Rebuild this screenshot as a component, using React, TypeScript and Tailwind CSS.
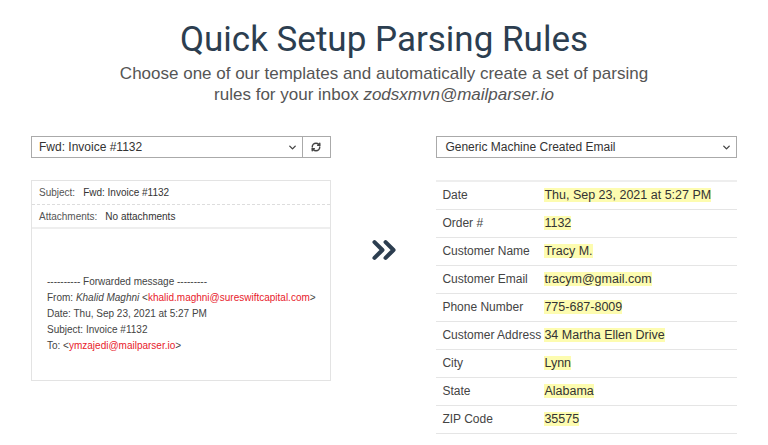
import { ChevronsRight, ChevronDown, RefreshCw } from "lucide-react";

const rows: [string, string][] = [
  ["Date", "Thu, Sep 23, 2021 at 5:27 PM"],
  ["Order #", "1132"],
  ["Customer Name", "Tracy M."],
  ["Customer Email", "tracym@gmail.com"],
  ["Phone Number", "775-687-8009"],
  ["Customer Address", "34 Martha Ellen Drive"],
  ["City", "Lynn"],
  ["State", "Alabama"],
  ["ZIP Code", "35575"],
];

export default function App() {
  return (
    <div className="w-[768px] h-[445px] overflow-hidden bg-white font-[Liberation_Sans] text-[#333]">
      <div className="pt-[18px] text-center">
        <h1 className="text-[35px] leading-[44px] text-[#2c3e50] font-[Roboto]">Quick Setup Parsing Rules</h1>
        <p className="mt-[1px] text-[17px] leading-[21px] text-[#555]">
          Choose one of our templates and automatically create a set of parsing
          <br />
          rules for your inbox <i>zodsxmvn@mailparser.io</i>
        </p>
      </div>

      <div className="flex mt-[31px] px-[31px]">
        <div className="w-[300px]">
          <div className="flex h-[22px] border border-[#aaa]">
            <div className="flex-1 flex items-center justify-between pl-[7px] pr-[4px] text-[12px]">
              <span>Fwd: Invoice #1132</span>
              <ChevronDown size={11} strokeWidth={3} className="text-[#444]" />
            </div>
            <div className="w-[28px] border-l border-[#aaa] flex items-center justify-center">
              <RefreshCw size={10} strokeWidth={3.5} className="text-[#444]" />
            </div>
          </div>
          <div className="mt-[22px] h-[201px] border border-[#e3e3e3] text-[10px]">
            <div className="h-[24px] flex items-center px-[7px] border-b border-dashed border-[#ddd]">
              <span className="text-[#555]">Subject:</span>
              <span className="ml-[8px]">Fwd: Invoice #1132</span>
            </div>
            <div className="h-[24px] flex items-center px-[7px] border-b-2 border-[#eee]">
              <span className="text-[#555]">Attachments:</span>
              <span className="ml-[8px]">No attachments</span>
            </div>
            <div className="pl-[15px] pt-[45px] leading-[16px] text-[#444]">
              <div>---------- Forwarded message ---------</div>
              <div>From: <i>Khalid Maghni</i> &lt;<span className="text-[#e8212b]">khalid.maghni@sureswiftcapital.com</span>&gt;</div>
              <div>Date: Thu, Sep 23, 2021 at 5:27 PM</div>
              <div>Subject: Invoice #1132</div>
              <div>To: &lt;<span className="text-[#e8212b]">ymzajedi@mailparser.io</span>&gt;</div>
            </div>
          </div>
        </div>

        <div className="w-[106px] flex justify-center pt-[95px]">
          <ChevronsRight size={38} strokeWidth={2.6} className="text-[#2c3e50]" />
        </div>

        <div className="w-[301px]">
          <div className="flex h-[22px] border border-[#aaa] items-center justify-between pl-[8px] pr-[4px] text-[12px]">
            <span>Generic Machine Created Email</span>
            <ChevronDown size={11} strokeWidth={3} className="text-[#444]" />
          </div>
          <div className="mt-[22px] border-t-2 border-[#eee] text-[12px]">
            {rows.map(([k, v]) => (
              <div key={k} className="flex border-b border-[#e5e5e5] py-[6px] min-h-[28px]">
                <div className="w-[108px] shrink-0 pl-[6px] leading-[15px] text-[#444]">{k}</div>
                <div className="leading-[15px]">
                  <span className="bg-[#fdfcb0] text-[#333] text-[12.5px]">{v}</span>
                </div>
              </div>
            ))}
          </div>
        </div>
      </div>
    </div>
  );
}
